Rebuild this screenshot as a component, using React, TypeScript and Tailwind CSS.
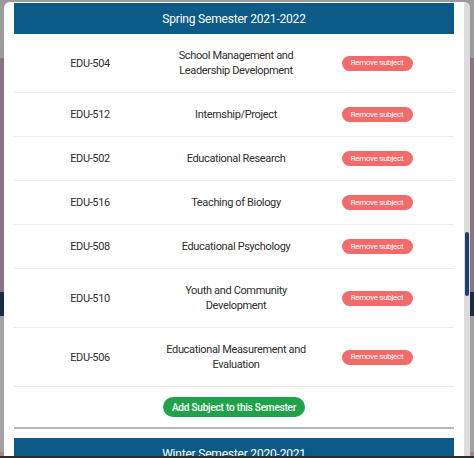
import React from "react";

const subjects = [
  { code: "EDU-504", name: "School Management and Leadership Development" },
  { code: "EDU-512", name: "Internship/Project" },
  { code: "EDU-502", name: "Educational Research" },
  { code: "EDU-516", name: "Teaching of Biology" },
  { code: "EDU-508", name: "Educational Psychology" },
  { code: "EDU-510", name: "Youth and Community Development" },
  { code: "EDU-506", name: "Educational Measurement and Evaluation" },
];

function SubjectRow({ code, name }: { code: string; name: string }) {
  return (
    <div className="grid grid-cols-[152px_140px_1fr] items-center border-b border-[#ececec] py-[14px] text-center text-[11px] leading-[15px] tracking-[-0.35px] text-[#2e2e2e]">
      <div>{code}</div>
      <div>{name}</div>
      <div className="flex justify-center pr-[6px]">
        <button className="flex h-[15px] w-[71px] items-center justify-center rounded-full bg-[#f26b6b] text-[8px] leading-none tracking-[-0.3px] text-white">
          Remove subject
        </button>
      </div>
    </div>
  );
}

export default function App() {
  return (
    <div
      className="relative h-[458px] w-[474px] overflow-hidden"
      style={{ fontFamily: "Roboto, 'Noto Sans', sans-serif" }}
    >
      {/* dimmed page behind the modal */}
      <div className="flex h-full flex-col">
        <div className="h-[58px] bg-[#9b9b9b]" />
        <div className="h-[234px] bg-[#8b7384]" />
        <div className="h-[24px] bg-[#1c2b45]" />
        <div className="flex-1 bg-[#a2a2a2]" />
        <div className="h-[6px] bg-[#a9808f]" />
      </div>

      {/* modal */}
      <div className="absolute left-[4px] top-[2px] flex h-[470px] w-[466px] overflow-hidden rounded-t-[6px] bg-white">
        <div className="flex-1 px-[10px] pt-[1px]">
          <div className="flex h-[31px] items-center justify-center bg-[#0b5a87] text-[12px] tracking-[-0.2px] text-white">
            Spring Semester 2021-2022
          </div>
          {subjects.map((s) => (
            <SubjectRow key={s.code} code={s.code} name={s.name} />
          ))}
          <div className="flex h-[42px] items-center justify-center border-b-2 border-[#b8b8b8]">
            <button className="flex h-[20px] items-center rounded-full bg-[#1fa34a] px-[9px] text-[10px] font-medium tracking-[-0.2px] text-white">
              Add Subject to this Semester
            </button>
          </div>
          <div className="mt-[9px] flex h-[31px] items-center justify-center bg-[#0b5a87] text-[12px] tracking-[-0.2px] text-white">
            Winter Semester 2020-2021
          </div>
        </div>
        <div className="relative w-[6px] bg-[#dcdcdc]">
          <div className="absolute left-[1px] top-[230px] h-[64px] w-[4px] rounded-full bg-[#1d3f6e]" />
        </div>
      </div>

      <div className="absolute bottom-0 left-0 h-[2px] w-full bg-[#2b2b2b]" />
    </div>
  );
}
